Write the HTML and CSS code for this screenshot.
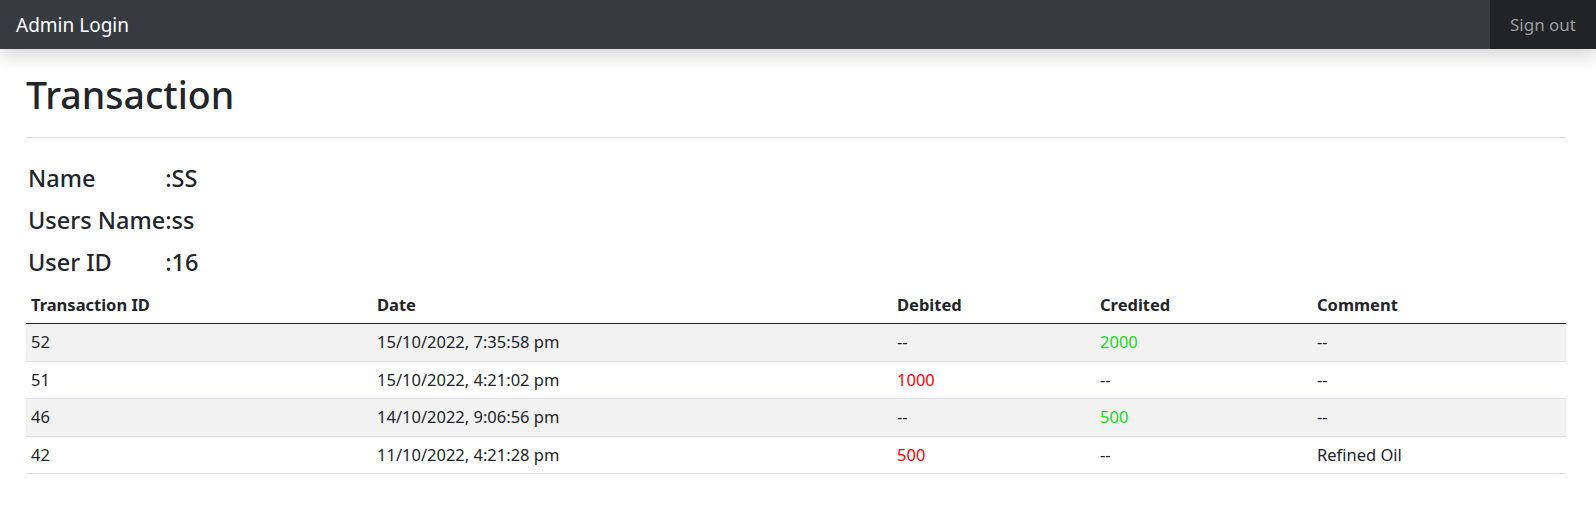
FILE: index.html
```html
<!DOCTYPE html>
<html lang="en">
<head>
<meta charset="utf-8">
<title>Transaction</title>
<link rel="stylesheet" href="styles.css">
</head>
<body>
<header class="navbar">
  <a class="brand" href="#">Admin Login</a>
  <div class="nav-right">
    <a class="signout" href="#">Sign out</a>
  </div>
</header>
<main class="main">
  <h1 class="title">Transaction</h1>
  <div class="info">
    <span class="info-label">Name</span><span class="info-value">:SS</span>
    <span class="info-label">Users Name</span><span class="info-value">:ss</span>
    <span class="info-label">User ID</span><span class="info-value">:16</span>
  </div>
  <table class="tx">
    <colgroup>
      <col class="c1"><col class="c2"><col class="c3"><col class="c4"><col class="c5">
    </colgroup>
    <thead>
      <tr><th>Transaction ID</th><th>Date</th><th>Debited</th><th>Credited</th><th>Comment</th></tr>
    </thead>
    <tbody>
      <tr class="odd"><td>52</td><td>15/10/2022, 7:35:58 pm</td><td>--</td><td class="cr">2000</td><td>--</td></tr>
      <tr><td>51</td><td>15/10/2022, 4:21:02 pm</td><td class="db">1000</td><td>--</td><td>--</td></tr>
      <tr class="odd"><td>46</td><td>14/10/2022, 9:06:56 pm</td><td>--</td><td class="cr">500</td><td>--</td></tr>
      <tr><td>42</td><td>11/10/2022, 4:21:28 pm</td><td class="db">500</td><td>--</td><td>Refined Oil</td></tr>
    </tbody>
  </table>
</main>
</body>
</html>
```
FILE: styles.css
```css
* { box-sizing: border-box; }
html, body { margin: 0; padding: 0; }
body {
  font-family: "Noto Sans", "Open Sans", "Liberation Sans", sans-serif;
  color: #212529;
  background: #fff;
  font-size: 16px;
}
.navbar {
  display: flex;
  justify-content: space-between;
  align-items: stretch;
  height: 49px;
  background: #373a40;
  box-shadow: 0 8px 16px rgba(0,0,0,0.15);
  position: relative;
  z-index: 1;
}
.brand {
  display: flex;
  align-items: center;
  padding: 0 16px;
  color: #fff;
  text-decoration: none;
  font-size: 19px;
}
.nav-right {
  display: flex;
  align-items: center;
  background: #212326;
  padding: 0 20px;
}
.signout {
  color: #9a9c9f;
  text-decoration: none;
  font-size: 17px;
}
.main {
  margin-left: 26px;
  width: 1540px;
}
.title {
  margin: 0;
  padding-top: 24px;
  font-size: 37.5px;
  font-weight: 500;
  line-height: 44px;
  padding-bottom: 20px;
  border-bottom: 1px solid #dedfe0;
}
.info {
  display: grid;
  grid-template-columns: max-content auto;
  row-gap: 13px;
  padding-top: 26px;
  padding-left: 2px;
  padding-bottom: 10px;
  font-size: 23.5px;
  font-weight: 500;
  line-height: 29px;
}
.tx {
  width: 1540px;
  border-collapse: collapse;
  table-layout: fixed;
  font-size: 16.5px;
}
.c1 { width: 346px; }
.c2 { width: 520px; }
.c3 { width: 203px; }
.c4 { width: 217px; }
.c5 { width: 254px; }
.tx th {
  text-align: left;
  font-weight: 700;
  padding: 6px 5px;
  line-height: 24px;
  border-bottom: 1.5px solid #212529;
}
.tx td {
  padding: 6.3px 5px;
  line-height: 24px;
  border-bottom: 1px solid #dee2e6;
}
.tx tr.odd td { background: #f2f2f2; }
.cr { color: #1ad81a; }
.db { color: #ff0000; }
```
